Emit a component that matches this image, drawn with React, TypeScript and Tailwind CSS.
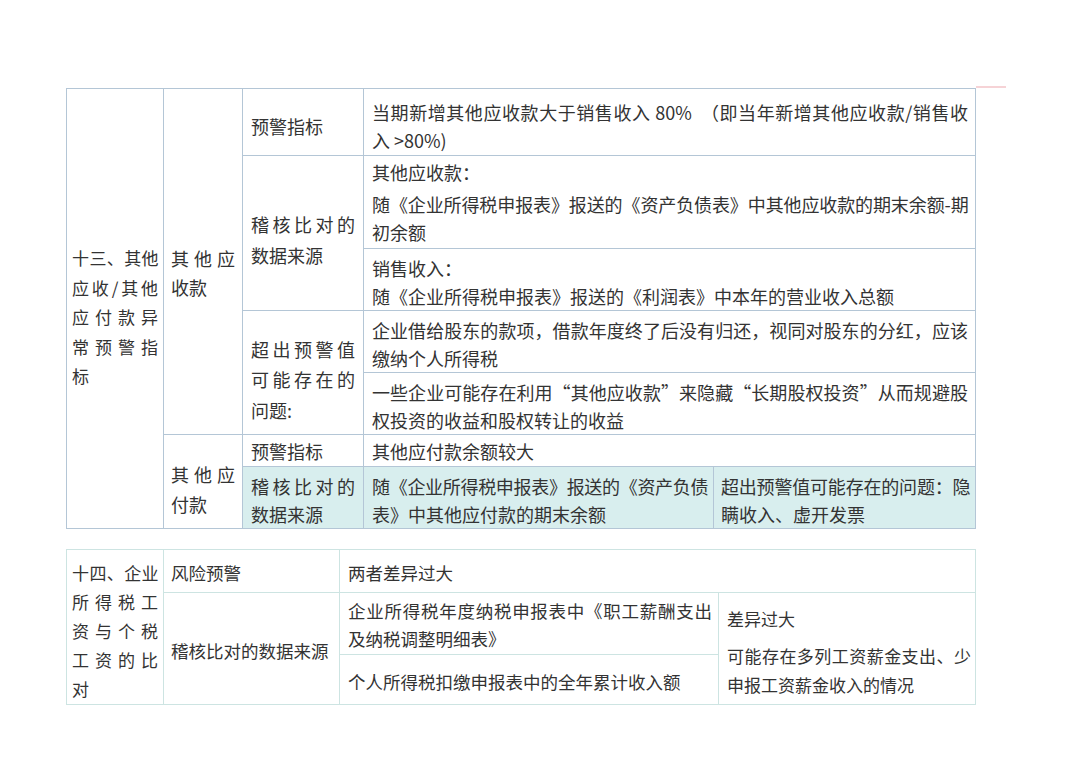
import React from "react";

type L = string | [string, string];

const Lines = ({ lines }: { lines: L[] }) => (
  <>
    {lines.map((item, i) => {
      const t = typeof item === "string" ? item : item[0];
      const c = typeof item === "string" ? "" : item[1];
      return (
        <div
          key={i}
          className={`${i < lines.length - 1 ? "text-justify [text-align-last:justify]" : "text-left"} ${c}`}
        >
          {t}
        </div>
      );
    })}
  </>
);

const b1 = "border border-[#b4c6d6] align-middle";
const b2 = "border border-[#cde4e2] align-middle";

export default function App() {
  return (
    <div className="min-h-screen bg-white pt-[88px] pl-[66px] text-[#333] [font-family:'Noto_Sans_CJK_SC','Noto_Sans',sans-serif]">
      <div className="flex items-start">
        <table className="w-[909px] table-fixed border-collapse text-[18px] leading-[28px]">
          <colgroup>
            <col className="w-[97px]" />
            <col className="w-[79px]" />
            <col className="w-[121px]" />
            <col className="w-[350px]" />
            <col className="w-[262px]" />
          </colgroup>
          <tbody>
            <tr className="h-[67px]">
              <td rowSpan={7} className={`${b1} px-[5px] pt-[17px] pb-0 text-[17px] leading-[29.5px]`}>
                <Lines lines={[["十三、其他", "tracking-[-0.6px]"], "应收/其他", "应付款异", "常预警指", "标"]} />
              </td>
              <td rowSpan={5} className={`${b1} px-[7px] pt-[23px] pb-0 leading-[29px]`}>
                <Lines lines={["其他应", "收款"]} />
              </td>
              <td className={`${b1} px-[8px] pt-[8px] pb-0`}>预警指标</td>
              <td colSpan={2} className={`${b1} pl-[8px] pr-[7px] pt-[7px] pb-0`}>
                <Lines lines={["当期新增其他应收款大于销售收入 80%\u00a0\u00a0（即当年新增其他应收款/销售收", "入 >80%)"]} />
              </td>
            </tr>
            <tr className="h-[93px]">
              <td rowSpan={2} className={`${b1} px-[8px] pt-[14px] pb-0 leading-[31px]`}>
                <Lines lines={["稽核比对的", "数据来源"]} />
              </td>
              <td colSpan={2} className={`${b1} pl-[8px] pr-[7px] pt-0 pb-[1px]`}>
                <div>其他应收款：</div>
                <div className="mt-[4px]">
                  <Lines
                    lines={[
                      ["随《企业所得税申报表》报送的《资产负债表》中其他应收款的期末余额-期", "tracking-[-0.7px] whitespace-nowrap"],
                      "初余额",
                    ]}
                  />
                </div>
              </td>
            </tr>
            <tr className="h-[61px]">
              <td colSpan={2} className={`${b1} pl-[8px] pr-[7px] pt-[5px] pb-0`}>
                <div>销售收入：</div>
                <div>随《企业所得税申报表》报送的《利润表》中本年的营业收入总额</div>
              </td>
            </tr>
            <tr className="h-[62px]">
              <td rowSpan={2} className={`${b1} px-[8px] pt-[14px] pb-0 leading-[30.5px]`}>
                <Lines lines={["超出预警值", "可能存在的", "问题:"]} />
              </td>
              <td colSpan={2} className={`${b1} pl-[8px] pr-[7px] pt-[5px] pb-0`}>
                <Lines lines={["企业借给股东的款项，借款年度终了后没有归还，视同对股东的分红，应该", "缴纳个人所得税"]} />
              </td>
            </tr>
            <tr className="h-[62px]">
              <td colSpan={2} className={`${b1} pl-[8px] pr-[7px] pt-[5px] pb-0`}>
                <Lines lines={["一些企业可能存在利用“其他应收款”来隐藏“长期股权投资”从而规避股", "权投资的收益和股权转让的收益"]} />
              </td>
            </tr>
            <tr className="h-[32px]">
              <td rowSpan={2} className={`${b1} px-[7px] pt-[14px] pb-0 leading-[30px]`}>
                <Lines lines={["其他应", "付款"]} />
              </td>
              <td className={`${b1} px-[8px] pt-0 pb-0`}>预警指标</td>
              <td colSpan={2} className={`${b1} px-[8px] pt-0 pb-0`}>其他应付款余额较大</td>
            </tr>
            <tr className="h-[62px] bg-[#d8eeee]">
              <td className={`${b1} px-[8px] pt-[5px] pb-0`}>
                <Lines lines={["稽核比对的", "数据来源"]} />
              </td>
              <td className={`${b1} pl-[8px] pr-[5px] pt-[5px] pb-0`}>
                <Lines lines={[["随《企业所得税申报表》报送的《资产负债", "tracking-[-0.5px] whitespace-nowrap"], "表》中其他应付款的期末余额"]} />
              </td>
              <td className={`${b1} pl-[7px] pr-[5px] pt-[5px] pb-0`}>
                <Lines lines={[["超出预警值可能存在的问题：隐", "tracking-[-0.5px] whitespace-nowrap"], "瞒收入、虚开发票"]} />
              </td>
            </tr>
          </tbody>
        </table>
        <div className="w-[30px] h-[2px] mt-[-2px] bg-[#f6d3d6]" />
      </div>

      <table className="mt-[20px] w-[909px] table-fixed border-collapse text-[17.5px] leading-[28px]">
        <colgroup>
          <col className="w-[97px]" />
          <col className="w-[176px]" />
          <col className="w-[379px]" />
          <col className="w-[257px]" />
        </colgroup>
        <tbody>
          <tr className="h-[43px]">
            <td rowSpan={3} className={`${b2} px-[5px] pt-[6px] pb-0 text-[17px] leading-[29px]`}>
              <Lines lines={[["十四、企业", "tracking-[-0.6px]"], "所得税工", "资与个税", "工资的比", "对"]} />
            </td>
            <td className={`${b2} px-[7px] pt-[3px] pb-0`}>风险预警</td>
            <td colSpan={2} className={`${b2} px-[8px] pt-[3px] pb-0`}>两者差异过大</td>
          </tr>
          <tr className="h-[62px]">
            <td rowSpan={2} className={`${b2} px-[7px] pt-[4px] pb-0`}>稽核比对的数据来源</td>
            <td className={`${b2} pl-[8px] pr-[6px] pt-[2px] pb-0`}>
              <Lines lines={["企业所得税年度纳税申报表中《职工薪酬支出", "及纳税调整明细表》"]} />
            </td>
            <td rowSpan={2} className={`${b2} pl-[8px] pr-[4px] pt-[6px] pb-0 text-[17px] leading-[29px]`}>
              <div>差异过大</div>
              <div className="mt-[8px]">
                <Lines lines={["可能存在多列工资薪金支出、少", "申报工资薪金收入的情况"]} />
              </div>
            </td>
          </tr>
          <tr className="h-[50px]">
            <td className={`${b2} px-[8px] pt-[4px] pb-0`}>个人所得税扣缴申报表中的全年累计收入额</td>
          </tr>
        </tbody>
      </table>
    </div>
  );
}
